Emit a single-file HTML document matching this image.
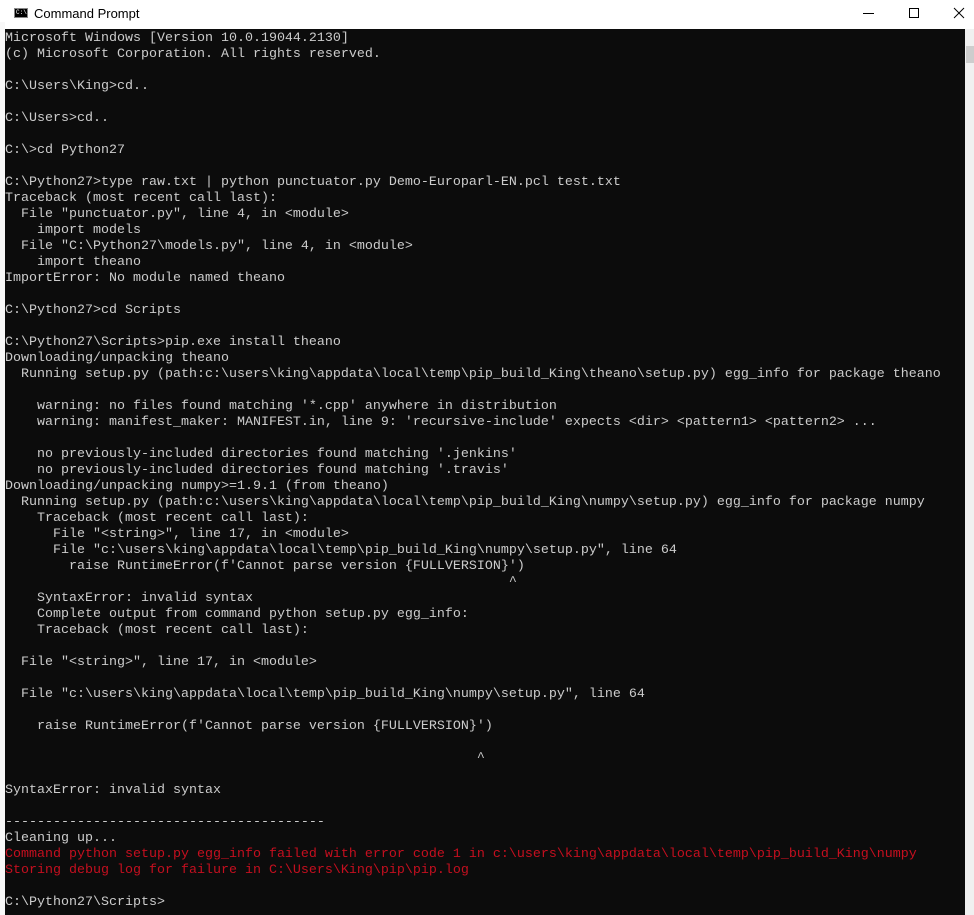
<!DOCTYPE html>
<html><head><meta charset="utf-8"><style>
html,body{margin:0;padding:0;width:974px;height:915px;overflow:hidden;background:#fff;}
.title{position:absolute;left:0;top:0;width:974px;height:29px;background:#fff;}
.title .t{position:absolute;left:34px;top:6px;font:13px "Liberation Sans",sans-serif;color:#000;}
.icon{position:absolute;left:14px;top:8px;width:14px;height:10px;background:#000;border:1px solid #888;box-sizing:border-box;}
.icon span{position:absolute;left:1px;top:1px;font:6px "Liberation Mono",monospace;color:#fff;line-height:6px;}
.term{position:absolute;left:5px;top:29px;width:960px;height:886px;background:#0c0c0c;}
.sb{position:absolute;left:965px;top:29px;width:9px;height:886px;background:#f0f0f0;}
.thumb{position:absolute;left:966px;top:46px;width:8px;height:17px;background:#cdcdcd;}
pre{position:absolute;left:5px;top:31px;margin:0;font:13.33px/16px "Liberation Mono",monospace;color:#cccccc;white-space:pre;}
.r{color:#c50f1f;}
.edge{position:absolute;left:0;top:22px;width:5px;height:893px;background:#f8f8f8;}
</style></head><body>
<div class="title"><div class="icon"><span>C:\</span></div><div class="t">Command Prompt</div>
<svg style="position:absolute;left:860px;top:5px" width="110" height="20">
<line x1="3" y1="8.5" x2="14" y2="8.5" stroke="#000" stroke-width="1"/>
<rect x="49.5" y="3.5" width="9" height="9" fill="none" stroke="#000" stroke-width="1"/>
<line x1="94" y1="3" x2="104" y2="13" stroke="#000"/><line x1="104" y1="3" x2="94" y2="13" stroke="#000"/>
</svg></div>
<div class="edge"></div>
<div class="term"></div>
<div class="sb"></div><div class="thumb"></div>
<pre>Microsoft Windows [Version 10.0.19044.2130]
(c) Microsoft Corporation. All rights reserved.

C:\Users\King&gt;cd..

C:\Users&gt;cd..

C:\&gt;cd Python27

C:\Python27&gt;type raw.txt | python punctuator.py Demo-Europarl-EN.pcl test.txt
Traceback (most recent call last):
  File "punctuator.py", line 4, in &lt;module&gt;
    import models
  File "C:\Python27\models.py", line 4, in &lt;module&gt;
    import theano
ImportError: No module named theano

C:\Python27&gt;cd Scripts

C:\Python27\Scripts&gt;pip.exe install theano
Downloading/unpacking theano
  Running setup.py (path:c:\users\king\appdata\local\temp\pip_build_King\theano\setup.py) egg_info for package theano

    warning: no files found matching '*.cpp' anywhere in distribution
    warning: manifest_maker: MANIFEST.in, line 9: 'recursive-include' expects &lt;dir&gt; &lt;pattern1&gt; &lt;pattern2&gt; ...

    no previously-included directories found matching '.jenkins'
    no previously-included directories found matching '.travis'
Downloading/unpacking numpy&gt;=1.9.1 (from theano)
  Running setup.py (path:c:\users\king\appdata\local\temp\pip_build_King\numpy\setup.py) egg_info for package numpy
    Traceback (most recent call last):
      File "&lt;string&gt;", line 17, in &lt;module&gt;
      File "c:\users\king\appdata\local\temp\pip_build_King\numpy\setup.py", line 64
        raise RuntimeError(f'Cannot parse version {FULLVERSION}')
                                                               ^
    SyntaxError: invalid syntax
    Complete output from command python setup.py egg_info:
    Traceback (most recent call last):

  File "&lt;string&gt;", line 17, in &lt;module&gt;

  File "c:\users\king\appdata\local\temp\pip_build_King\numpy\setup.py", line 64

    raise RuntimeError(f'Cannot parse version {FULLVERSION}')

                                                           ^

SyntaxError: invalid syntax

----------------------------------------
Cleaning up...
<span class="r">Command python setup.py egg_info failed with error code 1 in c:\users\king\appdata\local\temp\pip_build_King\numpy
Storing debug log for failure in C:\Users\King\pip\pip.log</span>

C:\Python27\Scripts&gt;</pre>
</body></html>
